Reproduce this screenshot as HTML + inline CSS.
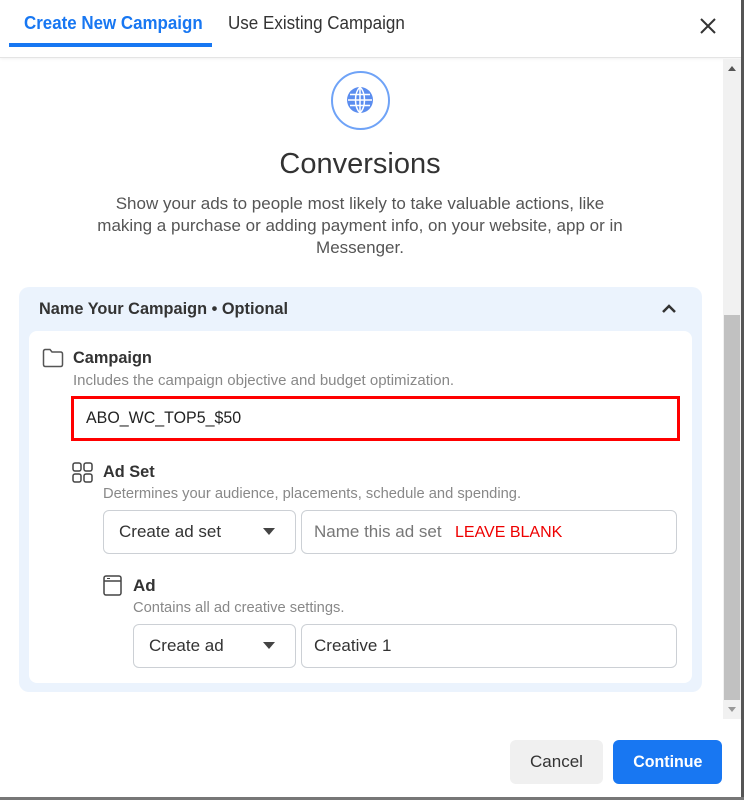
<!DOCTYPE html>
<html><head><meta charset="utf-8"><style>
*{box-sizing:border-box;margin:0;padding:0}
body{width:744px;height:800px;overflow:hidden;background:#fff;font-family:"Liberation Sans",sans-serif;position:relative;color:#1c1e21}
.a{position:absolute;white-space:nowrap}
.n{display:inline-block;transform-origin:left center}
.box{position:absolute;border:1px solid #ccd0d5;border-radius:6px;background:#fff}
.tri{position:absolute;width:0;height:0;border-left:6px solid transparent;border-right:6px solid transparent;border-top:7px solid #444}
</style></head><body>
<div class="a" style="left:0;top:0;width:744px;height:58px;border-bottom:1px solid #e4e4e4;box-shadow:0 1px 3px rgba(0,0,0,.06)"></div>
<div class="a" style="left:24px;top:13px;font-size:18px;color:#1877f2;font-weight:bold"><span class="n" style="transform:scaleX(.94)">Create New Campaign</span></div>
<div class="a" style="left:9px;top:43px;width:203px;height:4px;background:#1877f2"></div>
<div class="a" style="left:228px;top:13px;font-size:18px;color:#333"><span class="n" style="transform:scaleX(.945)">Use Existing Campaign</span></div>
<svg class="a" style="left:698px;top:16px" width="20" height="20"><path d="M3 3L17 17M17 3L3 17" stroke="#333" stroke-width="2"/></svg>

<div class="a" style="left:723px;top:59px;width:18px;height:660px;background:#f1f1f1"></div>
<div class="a" style="left:724px;top:315px;width:16px;height:385px;background:#c1c1c1"></div>
<div class="tri" style="left:728px;top:66px;border-top:none;border-bottom:5px solid #555;border-left-width:4px;border-right-width:4px"></div>
<div class="tri" style="left:728px;top:707px;border-top:5px solid #999;border-left-width:4px;border-right-width:4px"></div>
<div class="a" style="left:741px;top:0;width:3px;height:800px;background:#555"></div>
<div class="a" style="left:0;top:797px;width:744px;height:3px;background:#777"></div>

<div class="a" style="left:331px;top:71px;width:59px;height:59px;border-radius:50%;border:2px solid #6fa3f7"></div>
<svg class="a" style="left:345px;top:85px" width="30" height="30" viewBox="0 0 30 30"><circle cx="15" cy="15" r="13" fill="#5b8def"/><path d="M3 15H27M15 2V28M5 9.5H25M5 20.5H25M15 2C9 8 9 22 15 28M15 2C21 8 21 22 15 28" stroke="#fff" stroke-width="1.5" fill="none"/></svg>
<div class="a" style="left:0;width:720px;top:148px;text-align:center;font-size:29px;color:#333">Conversions</div>
<div class="a" style="left:0;width:720px;top:193px;text-align:center;font-size:17px;color:#555;line-height:22px;white-space:normal">Show your ads to people most likely to take valuable actions, like<br>making a purchase or adding payment info, on your website, app or in<br>Messenger.</div>

<div class="a" style="left:19px;top:287px;width:683px;height:405px;background:#ebf3fd;border-radius:10px"></div>
<div class="a" style="left:39px;top:299px;font-size:17px;color:#333;font-weight:bold"><span class="n" style="transform:scaleX(.96)">Name Your Campaign • Optional</span></div>
<svg class="a" style="left:661px;top:303px" width="16" height="12"><path d="M2 9L8 3L14 9" stroke="#333" stroke-width="2.5" fill="none"/></svg>
<div class="a" style="left:29px;top:331px;width:663px;height:352px;background:#fff;border-radius:8px"></div>

<svg class="a" style="left:42px;top:348px" width="22" height="20"><path d="M1.5 3.5Q1.5 1.5 3.5 1.5H8L10 4H18.5Q20.5 4 20.5 6V16.5Q20.5 18.5 18.5 18.5H3.5Q1.5 18.5 1.5 16.5Z" stroke="#555" stroke-width="1.5" fill="none"/></svg>
<div class="a" style="left:73px;top:348px;font-size:17px;font-weight:bold;color:#333"><span class="n" style="transform:scaleX(.96)">Campaign</span></div>
<div class="a" style="left:73px;top:372px;font-size:15px;color:#888">Includes the campaign objective and budget optimization.</div>
<div class="a" style="left:71px;top:396px;width:609px;height:45px;border:3px solid #f00"></div>
<div class="a" style="left:86px;top:408px;font-size:17px;color:#222"><span class="n" style="transform:scaleX(.94)">ABO_WC_TOP5_$50</span></div>

<svg class="a" style="left:72px;top:462px" width="22" height="22"><g stroke="#444" stroke-width="1.5" fill="none"><rect x="1" y="1" width="8" height="8" rx="2"/><rect x="12" y="1" width="8" height="8" rx="2"/><rect x="1" y="12" width="8" height="8" rx="2"/><rect x="12" y="12" width="8" height="8" rx="2"/></g></svg>
<div class="a" style="left:103px;top:462px;font-size:17px;font-weight:bold;color:#333"><span class="n" style="transform:scaleX(.96)">Ad Set</span></div>
<div class="a" style="left:103px;top:486px;font-size:14.7px;color:#888">Determines your audience, placements, schedule and spending.</div>
<div class="box" style="left:103px;top:510px;width:193px;height:44px"></div>
<div class="a" style="left:119px;top:522px;font-size:17px;color:#333">Create ad set</div>
<div class="tri" style="left:263px;top:528px"></div>
<div class="box" style="left:301px;top:510px;width:376px;height:44px"></div>
<div class="a" style="left:314px;top:522px;font-size:17px;color:#777">Name this ad set</div>
<div class="a" style="left:455px;top:524px;font-size:16px;color:#e00">LEAVE BLANK</div>

<svg class="a" style="left:103px;top:575px" width="20" height="22"><rect x="1" y="1" width="17" height="19" rx="2" stroke="#444" stroke-width="1.5" fill="none"/><path d="M1 6H18" stroke="#444" stroke-width="1.5"/><path d="M4 3.5H7" stroke="#444" stroke-width="1"/></svg>
<div class="a" style="left:133px;top:576px;font-size:17px;font-weight:bold;color:#333">Ad</div>
<div class="a" style="left:133px;top:600px;font-size:14.7px;color:#888">Contains all ad creative settings.</div>
<div class="box" style="left:133px;top:624px;width:163px;height:44px"></div>
<div class="a" style="left:149px;top:636px;font-size:17px;color:#333">Create ad</div>
<div class="tri" style="left:263px;top:642px"></div>
<div class="box" style="left:301px;top:624px;width:376px;height:44px"></div>
<div class="a" style="left:314px;top:636px;font-size:17px;color:#333">Creative 1</div>

<div class="a" style="left:510px;top:740px;width:93px;height:44px;background:#f0f0f0;border-radius:6px;text-align:center;line-height:44px;font-size:17px;color:#333">Cancel</div>
<div class="a" style="left:613px;top:740px;width:109px;height:44px;background:#1877f2;border-radius:6px;text-align:center;line-height:44px;font-size:17px;color:#fff;font-weight:bold"><span style="display:inline-block;transform:scaleX(.94)">Continue</span></div>
</body></html>
